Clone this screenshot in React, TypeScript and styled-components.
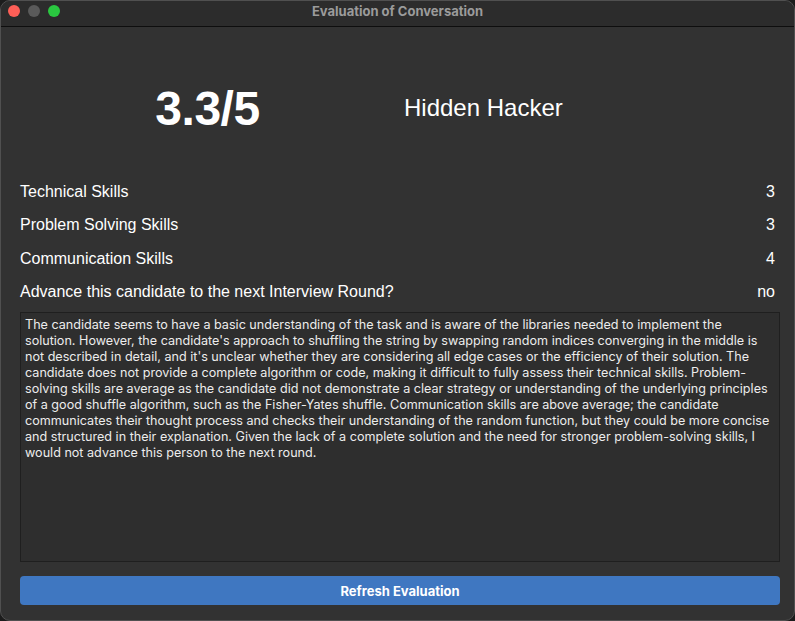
import React from "react";
import styled, { createGlobalStyle } from "styled-components";

const Global = createGlobalStyle`
  html, body { margin: 0; padding: 0; background: #1c1c1c; }
  body { width: 795px; height: 621px; overflow: hidden; }
  * { box-sizing: border-box; }
`;

const Window = styled.div`
  width: 795px;
  height: 621px;
  background: #323232;
  border: 1px solid #505050;
  border-radius: 10px;
  overflow: hidden;
  display: flex;
  flex-direction: column;
  font-family: "Liberation Sans", Arial, sans-serif;
  color: #ffffff;
`;

const TitleBar = styled.div`
  height: 26px;
  flex: 0 0 26px;
  background: #2c2c2c;
  border-bottom: 1px solid #0e0e0e;
  position: relative;
  display: flex;
  align-items: center;
  justify-content: center;
`;

const Lights = styled.div`
  position: absolute;
  left: 7px;
  top: 4px;
  display: flex;
  gap: 8px;
`;

const Light = styled.span<{ $c: string }>`
  width: 12px;
  height: 12px;
  border-radius: 50%;
  background: ${(p) => p.$c};
`;

const Title = styled.div`
  font-family: Inter, "Liberation Sans", sans-serif;
  font-weight: 700;
  font-size: 13px;
  color: #9b9b9b;
  margin-top: -5px;
`;

const Body = styled.div`
  flex: 1;
  display: flex;
  flex-direction: column;
  padding: 0 14px 15px 19px;
`;

const Header = styled.div`
  height: 151px;
  display: flex;
  align-items: center;
  padding-top: 11px;
`;

const Score = styled.div`
  width: 375px;
  text-align: center;
  font-weight: 700;
  font-size: 48px;
  letter-spacing: -0.5px;
`;

const Name = styled.div`
  padding-left: 9px;
  font-size: 24px;
`;

const Rows = styled.div`
  display: flex;
  flex-direction: column;
  margin-top: -3px;
`;

const Row = styled.div`
  height: 33.5px;
  display: flex;
  align-items: center;
  justify-content: space-between;
  font-size: 16px;
  padding-right: 5px;
`;

const Feedback = styled.div`
  margin-top: 3px;
  height: 250px;
  border: 1px solid #1f1f1f;
  background: #2e2e2e;
  padding: 4px 4px;
  font-family: Inter, "Noto Sans", sans-serif;
  font-size: 12.6px;
  line-height: 16px;
  white-space: pre-line;
  color: #ececec;
`;

const Button = styled.button`
  margin-top: 14px;
  height: 29px;
  border: none;
  border-radius: 4px;
  background: #3f77c1;
  color: #ffffff;
  font-family: Inter, "Liberation Sans", sans-serif;
  font-weight: 700;
  font-size: 13px;
  padding: 0;
`;

const rows: [string, string][] = [
  ["Technical Skills", "3"],
  ["Problem Solving Skills", "3"],
  ["Communication Skills", "4"],
  ["Advance this candidate to the next Interview Round?", "no"],
];

const text = [
  "The candidate seems to have a basic understanding of the task and is aware of the libraries needed to implement the",
  "solution. However, the candidate's approach to shuffling the string by swapping random indices converging in the middle is",
  "not described in detail, and it's unclear whether they are considering all edge cases or the efficiency of their solution. The",
  "candidate does not provide a complete algorithm or code, making it difficult to fully assess their technical skills. Problem-",
  "solving skills are average as the candidate did not demonstrate a clear strategy or understanding of the underlying principles",
  "of a good shuffle algorithm, such as the Fisher-Yates shuffle. Communication skills are above average; the candidate",
  "communicates their thought process and checks their understanding of the random function, but they could be more concise",
  "and structured in their explanation. Given the lack of a complete solution and the need for stronger problem-solving skills, I",
  "would not advance this person to the next round.",
].join("\n");

export default function App() {
  return (
    <>
      <Global />
      <Window>
        <TitleBar>
          <Lights>
            <Light $c="#fe5f57" />
            <Light $c="#5a5a5a" />
            <Light $c="#2ac840" />
          </Lights>
          <Title>Evaluation of Conversation</Title>
        </TitleBar>
        <Body>
          <Header>
            <Score>3.3/5</Score>
            <Name>Hidden Hacker</Name>
          </Header>
          <Rows>
            {rows.map(([k, v]) => (
              <Row key={k}>
                <span>{k}</span>
                <span>{v}</span>
              </Row>
            ))}
          </Rows>
          <Feedback>{text}</Feedback>
          <Button>Refresh Evaluation</Button>
        </Body>
      </Window>
    </>
  );
}
